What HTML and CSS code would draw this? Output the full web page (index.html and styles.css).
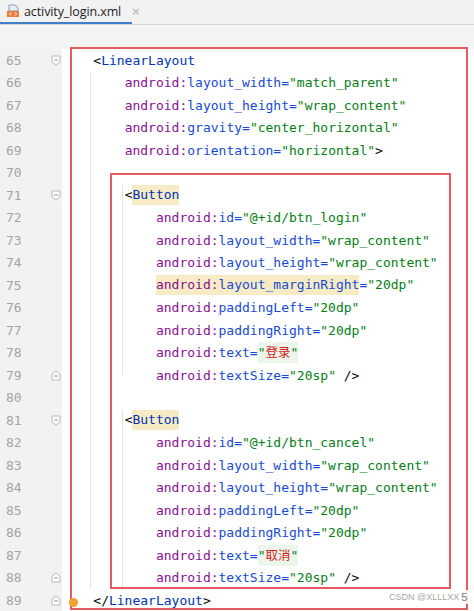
FILE: index.html
```html
<!DOCTYPE html>
<html>
<head>
<meta charset="utf-8">
<link rel="stylesheet" href="styles.css">
</head>
<body>
<div class="tabbar">
  <div class="tab">
    <svg class="ficon" width="14" height="14" viewBox="0 0 14 14">
      <path d="M3 1h6l3 3v3H3z" fill="#e8edf2" stroke="#8a9ab0" stroke-width="1"/>
      <rect x="1" y="7" width="12" height="6" fill="#e87b3e"/>
      <path d="M5 8.5L3.5 10 5 11.5M9 8.5l1.5 1.5L9 11.5" stroke="#fff" stroke-width="1" fill="none"/>
    </svg>
    <span class="tabname">activity_login.xml</span>
    <span class="close">×</span>
  </div>
</div>
<div class="strip"></div>
<div class="editor">
  <div class="ln"><span class="num">65</span><span class="fold"><svg width="10" height="11" viewBox="0 0 10 11"><path d="M1 1h8v6l-4 3-4-3z" fill="#fff" stroke="#b8b8b8"/><path d="M3 5h4" stroke="#999"/></svg></span><span class="code">    <span class="p">&lt;</span><span class="t">LinearLayout</span></span></div>
  <div class="ln"><span class="num">66</span><span class="fold"></span><span class="code">        <span class="ns">android:</span><span class="a">layout_width=</span><span class="v">"match_parent"</span></span></div>
  <div class="ln"><span class="num">67</span><span class="fold"></span><span class="code">        <span class="ns">android:</span><span class="a">layout_height=</span><span class="v">"wrap_content"</span></span></div>
  <div class="ln"><span class="num">68</span><span class="fold"></span><span class="code">        <span class="ns">android:</span><span class="a">gravity=</span><span class="v">"center_horizontal"</span></span></div>
  <div class="ln"><span class="num">69</span><span class="fold"></span><span class="code">        <span class="ns">android:</span><span class="a">orientation=</span><span class="v">"horizontal"</span><span class="p">&gt;</span></span></div>
  <div class="ln"><span class="num">70</span><span class="fold"></span><span class="code"></span></div>
  <div class="ln"><span class="num">71</span><span class="fold"><svg width="10" height="11" viewBox="0 0 10 11"><path d="M1 1h8v6l-4 3-4-3z" fill="#fff" stroke="#b8b8b8"/><path d="M3 5h4" stroke="#999"/></svg></span><span class="code">        <span class="p">&lt;</span><span class="t hl">Button</span></span></div>
  <div class="ln"><span class="num">72</span><span class="fold"></span><span class="code">            <span class="ns">android:</span><span class="a">id=</span><span class="v">"@+id/btn_login"</span></span></div>
  <div class="ln"><span class="num">73</span><span class="fold"></span><span class="code">            <span class="ns">android:</span><span class="a">layout_width=</span><span class="v">"wrap_content"</span></span></div>
  <div class="ln"><span class="num">74</span><span class="fold"></span><span class="code">            <span class="ns">android:</span><span class="a">layout_height=</span><span class="v">"wrap_content"</span></span></div>
  <div class="ln"><span class="num">75</span><span class="fold"></span><span class="code">            <span class="hl"><span class="ns">android:</span><span class="a">layout_marginRight</span></span><span class="a">=</span><span class="v">"20dp"</span></span></div>
  <div class="ln"><span class="num">76</span><span class="fold"></span><span class="code">            <span class="ns">android:</span><span class="a">paddingLeft=</span><span class="v">"20dp"</span></span></div>
  <div class="ln"><span class="num">77</span><span class="fold"></span><span class="code">            <span class="ns">android:</span><span class="a">paddingRight=</span><span class="v">"20dp"</span></span></div>
  <div class="ln"><span class="num">78</span><span class="fold"></span><span class="code">            <span class="ns">android:</span><span class="a">text=</span><span class="str"><span class="v">"</span><span class="cn">登录</span><span class="v">"</span></span></span></div>
  <div class="ln"><span class="num">79</span><span class="fold"><svg width="10" height="11" viewBox="0 0 10 11"><path d="M1 10h8V4L5 1 1 4z" fill="#fff" stroke="#b8b8b8"/><path d="M3 6h4" stroke="#999"/></svg></span><span class="code">            <span class="ns">android:</span><span class="a">textSize=</span><span class="v">"20sp"</span> <span class="p">/&gt;</span></span></div>
  <div class="ln"><span class="num">80</span><span class="fold"></span><span class="code"></span></div>
  <div class="ln"><span class="num">81</span><span class="fold"><svg width="10" height="11" viewBox="0 0 10 11"><path d="M1 1h8v6l-4 3-4-3z" fill="#fff" stroke="#b8b8b8"/><path d="M3 5h4" stroke="#999"/></svg></span><span class="code">        <span class="p">&lt;</span><span class="t hl">Button</span></span></div>
  <div class="ln"><span class="num">82</span><span class="fold"></span><span class="code">            <span class="ns">android:</span><span class="a">id=</span><span class="v">"@+id/btn_cancel"</span></span></div>
  <div class="ln"><span class="num">83</span><span class="fold"></span><span class="code">            <span class="ns">android:</span><span class="a">layout_width=</span><span class="v">"wrap_content"</span></span></div>
  <div class="ln"><span class="num">84</span><span class="fold"></span><span class="code">            <span class="ns">android:</span><span class="a">layout_height=</span><span class="v">"wrap_content"</span></span></div>
  <div class="ln"><span class="num">85</span><span class="fold"></span><span class="code">            <span class="ns">android:</span><span class="a">paddingLeft=</span><span class="v">"20dp"</span></span></div>
  <div class="ln"><span class="num">86</span><span class="fold"></span><span class="code">            <span class="ns">android:</span><span class="a">paddingRight=</span><span class="v">"20dp"</span></span></div>
  <div class="ln"><span class="num">87</span><span class="fold"></span><span class="code">            <span class="ns">android:</span><span class="a">text=</span><span class="str"><span class="v">"</span><span class="cn">取消</span><span class="v">"</span></span></span></div>
  <div class="ln"><span class="num">88</span><span class="fold"><svg width="10" height="11" viewBox="0 0 10 11"><path d="M1 10h8V4L5 1 1 4z" fill="#fff" stroke="#b8b8b8"/><path d="M3 6h4" stroke="#999"/></svg></span><span class="code">            <span class="ns">android:</span><span class="a">textSize=</span><span class="v">"20sp"</span> <span class="p">/&gt;</span></span></div>
  <div class="ln"><span class="num">89</span><span class="fold"><svg width="10" height="11" viewBox="0 0 10 11"><path d="M1 10h8V4L5 1 1 4z" fill="#fff" stroke="#b8b8b8"/><path d="M3 6h4" stroke="#999"/></svg></span><span class="code">    <span class="p">&lt;/</span><span class="t">LinearLayout</span><span class="p">&gt;</span></span></div>

  <div class="guide g1"></div>
  <div class="guide g2"></div>
  <div class="guide g3"></div>
  <div class="box outer"></div>
  <div class="box inner"></div>
  <div class="dot"></div>
  <div class="wm">CSDN @XLLLXX <span class="wmi">5</span></div>
</div>
</body>
</html>
```
FILE: styles.css
```css
html, body {
  margin: 0;
  padding: 0;
  background: #ffffff;
  width: 474px;
  height: 611px;
  overflow: hidden;
}
.tabbar {
  height: 24px;
  background: #f2f2f2;
  border-bottom: 1px solid #d6d6d6;
  display: flex;
}
.tab {
  width: 126px;
  height: 22px;
  border-bottom: 2px solid #3f7fc8;
  display: flex;
  align-items: center;
  padding-left: 6px;
  box-sizing: content-box;
  gap: 4px;
}
.ficon { flex: none; }
.tabname {
  font-family: "Open Sans", "Noto Sans", sans-serif;
  font-size: 12.5px;
  color: #1e1e1e;
  letter-spacing: -0.1px;
}
.close {
  font-family: "DejaVu Sans", sans-serif;
  font-size: 11px;
  color: #b0b0b0;
  margin-left: 6px;
}
.strip {
  height: 24px;
  background: #f4f4f4;
}
.editor {
  position: relative;
  font-family: "DejaVu Sans Mono", monospace;
  font-size: 13px;
}
.ln {
  display: flex;
  height: 22.5px;
  align-items: center;
  white-space: pre;
}
.num {
  width: 44px;
  padding-left: 6px;
  box-sizing: border-box;
  color: #a4a4a4;
  background: #f2f2f2;
  height: 100%;
  display: flex;
  align-items: center;
  flex: none;
}
.fold {
  width: 18px;
  height: 100%;
  background: #f2f2f2;
  display: flex;
  align-items: center;
  justify-content: flex-start;
  padding-left: 7px;
  box-sizing: border-box;
  flex: none;
}
.code {
  color: #080808;
  padding-left: 0;
}
.p { color: #080808; }
.t { color: #0033b3; }
.ns { color: #871094; }
.a { color: #174ad4; }
.v { color: #067d17; }
.cn {
  color: #d01c1c;
  font-family: "Noto Sans CJK SC", sans-serif;
  font-size: 12.5px;
}
.hl {
  background: #f6ebc4;
  display: inline-block;
  line-height: 20px;
}
.str {
  background: #edf6ea;
  display: inline-block;
  line-height: 20px;
}
.guide {
  position: absolute;
  width: 1px;
  background: #e4e4e4;
}
.g1 { left: 90px; top: 23px; height: 517px; }
.g2 { left: 122px; top: 136px; height: 190px; }
.g3 { left: 122px; top: 361px; height: 180px; }
.box {
  position: absolute;
  border: 2px solid #e45c60;
  box-sizing: border-box;
}
.outer { left: 70px; top: -2px; width: 398px; height: 563px; }
.inner { left: 110px; top: 124px; width: 341px; height: 416px; }
.dot {
  position: absolute;
  left: 69px;
  top: 549px;
  width: 9px;
  height: 9px;
  border-radius: 50%;
  background: #f2a12e;
}
.wm {
  position: absolute;
  left: 388px;
  top: 541px;
  white-space: nowrap;
  display: flex;
  align-items: center;
  gap: 2px;
  font-family: "Liberation Sans", sans-serif;
  font-size: 9px;
  line-height: 14px;
  color: #a8a8a8;
  background: rgba(255,255,255,0.85);
  padding: 0 1px;
}
.wmi { color: #777; font-size: 11px; }
```
